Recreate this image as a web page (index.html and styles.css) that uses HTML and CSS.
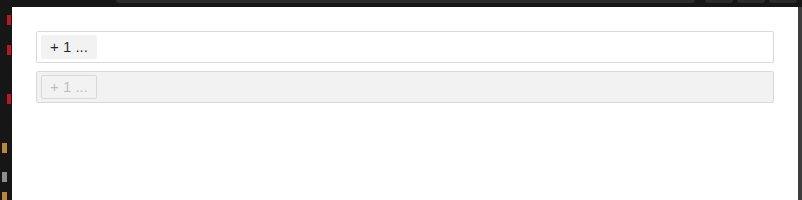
FILE: index.html
```html
<!DOCTYPE html>
<html>
<head>
    <title>Tag Select</title>
    <link rel="stylesheet" href="styles.css">
</head>
<body>
    <!-- top toolbar strip -->
    <div class="topbar">
        <div class="topbar-track"></div>
        <div class="topbar-btn"></div>
        <div class="topbar-btn"></div>
        <div class="topbar-btn"></div>
    </div>

    <div class="frame">
        <!-- gutter with markers -->
        <div class="gutter">
            <span class="mark red m1"></span>
            <span class="mark red m2"></span>
            <span class="mark red m3"></span>
            <span class="mark amber m4"></span>
            <span class="mark grey m5"></span>
            <span class="mark amber m6"></span>
        </div>

        <div class="panel">
            <div class="select">
                <span class="tag">+ 1 ...</span>
            </div>
            <div class="select disabled">
                <span class="tag">+ 1 ...</span>
            </div>
        </div>

        <div class="scrollbar"></div>
    </div>
</body>
</html>
```

FILE: styles.css
```css
html, body {
    margin: 0;
    height: 100%;
}
body {
    background: #161616;
    font-family: "Liberation Sans", Arial, sans-serif;
    font-size: 15px;
    color: rgba(0, 0, 0, 0.85);
    display: flex;
    flex-direction: column;
    overflow: hidden;
}

.topbar {
    flex-shrink: 0;
    height: 7px;
    display: flex;
    align-items: flex-start;
    padding: 0 5px 0 116px;
    gap: 4px;
}
.topbar-track {
    flex: 1;
    height: 3px;
    margin-right: 6px;
    background: #2c2c2c;
    border-radius: 0 0 3px 3px;
}
.topbar-btn {
    width: 28px;
    height: 3px;
    background: #2a2a2a;
    border-radius: 0 0 3px 3px;
}

.frame {
    flex: 1;
    min-height: 0;
    display: flex;
    overflow: hidden;
}
.gutter {
    width: 12px;
    flex-shrink: 0;
    display: flex;
    flex-direction: column;
    align-items: flex-end;
}
.mark {
    display: block;
    flex-shrink: 0;
    width: 4px;
    height: 10px;
}
.mark.red { background: #c0141e; margin-right: 1px; }
.mark.amber { background: #b8873c; width: 5px; margin-right: 5px; }
.mark.grey { background: #8d8d8d; width: 5px; margin-right: 5px; }
.m1 { margin-top: 8px; }
.m2 { margin-top: 20px; }
.m3 { margin-top: 39px; }
.m4 { margin-top: 39px; }
.m5 { margin-top: 19px; }
.m6 { margin-top: 10px; }

.panel {
    flex: 1;
    background: #fff;
    padding: 24px;
}
.scrollbar {
    width: 4px;
    flex-shrink: 0;
    background: #3c3c3c;
}

.select {
    height: 32px;
    box-sizing: border-box;
    border: 1px solid #d9d9d9;
    border-radius: 2px;
    padding: 3px 4px;
    display: flex;
    margin-bottom: 8px;
}
.tag {
    height: 24px;
    box-sizing: border-box;
    line-height: 22px;
    padding: 0 8px;
    background: #f2f2f2;
    border: 1px solid #f2f2f2;
    border-radius: 2px;
}
.select.disabled {
    background: #f2f2f2;
}
.select.disabled .tag {
    border-color: #d9d9d9;
    color: #bfbfbf;
}
```
